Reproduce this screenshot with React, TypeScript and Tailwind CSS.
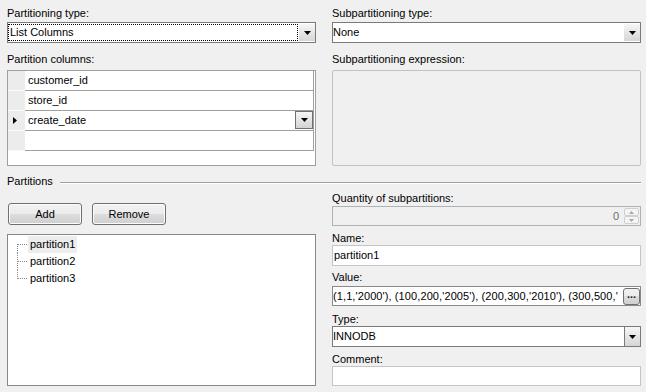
import React from "react";

function Label({ children, className = "" }: { children: React.ReactNode; className?: string }) {
  return <div className={`h-[13px] leading-[13px] whitespace-nowrap ${className}`}>{children}</div>;
}

function Arrow() {
  return (
    <svg width="7" height="4" viewBox="0 0 7 4" className="block">
      <path d="M0 0H7L3.5 4Z" fill="#000" />
    </svg>
  );
}

function DropBtn({ className = "" }: { className?: string }) {
  return (
    <div className={`w-[16px] flex items-center justify-center bg-linear-to-b from-[#f6f6f6] to-[#d6d6d6] ${className}`}>
      <Arrow />
    </div>
  );
}

function Btn({ children }: { children: React.ReactNode }) {
  return (
    <div className="w-[74px] h-[22px] rounded-[3px] border border-[#707070] bg-[linear-gradient(to_bottom,#f2f2f2_0%,#ebebeb_50%,#dddddd_50%,#cfcfcf_100%)] shadow-[inset_0_0_0_1px_#fbfbfb] flex items-center justify-center leading-none">
      {children}
    </div>
  );
}

function Grid() {
  const rows = ["customer_id", "store_id", "create_date", ""];
  return (
    <div className="mt-[4px] h-[96px] border border-[#a0a0a0] bg-white flex flex-col">
      {rows.map((r, i) => (
        <div key={i} className="flex h-[20px] mr-px">
          <div className="w-[17px] bg-[#ececec] border-b border-[#fafafa] flex items-center pl-[5px]">
            {i === 2 && (
              <svg width="4" height="7" viewBox="0 0 4 7" className="block">
                <path d="M0 0L4 3.5L0 7Z" fill="#000" />
              </svg>
            )}
          </div>
          <div className="flex-1 border-b border-r border-[#a0a0a0] flex items-center pl-[3px]">
            <span className="flex-1">{r}</span>
            {i === 2 && (
              <div className="self-start w-[18px] h-[18px] border border-[#707070] bg-linear-to-b from-[#f6f6f6] to-[#d4d4d4] flex items-center justify-center">
                <Arrow />
              </div>
            )}
          </div>
        </div>
      ))}
    </div>
  );
}

function Tree() {
  const items = ["partition1", "partition2", "partition3"];
  return (
    <div className="mt-[9px] h-[152px] border border-[#828790] bg-white pt-px">
      {items.map((t, i) => (
        <div key={t} className="flex h-[17px]">
          <svg width="20" height="17" viewBox="0 0 20 17" className="block shrink-0" shapeRendering="crispEdges">
            <line
              x1="9.5"
              x2="9.5"
              y1={i === 0 ? 8 : 0}
              y2={i === 2 ? 9 : 17}
              stroke="#8a8a8a"
              strokeDasharray="1 1"
            />
            <line x1="10" x2="20" y1="8.5" y2="8.5" stroke="#8a8a8a" strokeDasharray="1 1" />
          </svg>
          <div className={`px-[2px] leading-[17px] ${i === 0 ? "bg-[#ededed]" : ""}`}>{t}</div>
        </div>
      ))}
    </div>
  );
}

export default function App() {
  return (
    <div className="w-[646px] h-[392px] bg-[#f0f0f0] overflow-hidden text-[11px] text-black [font-family:'Liberation_Sans',Arial,sans-serif] pl-[7px] pr-[5px] pt-[7px]">
      <div className="flex gap-[16px]">
        <div className="w-[309px] flex flex-col">
          <Label>Partitioning type:</Label>
          <div className="mt-[2px] h-[21px] border border-[#7a7a7a] bg-white flex py-px">
            <div className="flex-1 mr-px border border-dotted border-black flex items-center pl-px">List Columns</div>
            <DropBtn />
          </div>
          <Label className="mt-[10px]">Partition columns:</Label>
          <Grid />
        </div>
        <div className="w-[309px] flex flex-col">
          <Label>Subpartitioning type:</Label>
          <div className="mt-[2px] h-[21px] border border-[#7a7a7a] bg-white flex py-px">
            <div className="flex-1 flex items-center">None</div>
            <DropBtn />
          </div>
          <Label className="mt-[10px]">Subpartitioning expression:</Label>
          <div className="mt-[4px] h-[96px] border border-[#c2c2c2] rounded-[2px] bg-[#f0f0f0]" />
        </div>
      </div>

      <div className="mt-[9px] flex">
        <Label>Partitions</Label>
        <div className="flex-1 ml-[7px] mt-[7px] h-[2px] border-t border-[#a0a0a0] border-b border-b-white" />
      </div>

      <div className="flex gap-[16px]">
        <div className="w-[309px] flex flex-col">
          <div className="mt-[15px] flex gap-[10px] pl-px">
            <Btn>Add</Btn>
            <Btn>Remove</Btn>
          </div>
          <Tree />
        </div>
        <div className="w-[309px] flex flex-col">
          <Label className="mt-[4px]">Quantity of subpartitions:</Label>
          <div className="mt-[1px] h-[20px] border border-[#adb2b5] bg-[#f0f0f0] flex py-px pr-px">
            <div className="flex-1 flex items-center justify-end pr-[5px] text-[#6d6d6d]">0</div>
            <div className="w-[15px] flex flex-col">
              <div className="flex-1 border border-[#cfcfcf] rounded-[2px] bg-[#f4f4f4] flex items-center justify-center">
                <svg width="5" height="3" viewBox="0 0 5 3" className="block">
                  <path d="M0 3L2.5 0L5 3Z" fill="#a8a8a8" />
                </svg>
              </div>
              <div className="flex-1 border border-[#cfcfcf] rounded-[2px] bg-[#f4f4f4] flex items-center justify-center">
                <svg width="5" height="3" viewBox="0 0 5 3" className="block">
                  <path d="M0 0L5 0L2.5 3Z" fill="#a8a8a8" />
                </svg>
              </div>
            </div>
          </div>
          <Label className="mt-[6px]">Name:</Label>
          <div className="h-[21px] border border-[#c5c5c5] bg-white flex items-center pl-px">partition1</div>
          <Label className="mt-[5px]">Value:</Label>
          <div className="mt-[2px] h-[20px] border border-[#8a8a8a] bg-white flex items-center">
            <div className="flex-1 min-w-0 whitespace-nowrap tracking-[0.1px]">
              (1,1,'2000'), (100,200,'2005'), (200,300,'2010'), (300,500,'
            </div>
            <div className="shrink-0 w-[17px] h-[17px] rounded-[3px] border border-[#707070] bg-[linear-gradient(to_bottom,#f2f2f2_0%,#ebebeb_50%,#dddddd_50%,#cfcfcf_100%)] flex items-center justify-center font-bold leading-none pb-[4px] text-[#222]">
              ...
            </div>
          </div>
          <Label className="mt-[7px]">Type:</Label>
          <div className="h-[21px] border border-[#7a7a7a] bg-white flex">
            <div className="flex-1 flex items-center">INNODB</div>
            <DropBtn className="border-l border-[#7a7a7a]" />
          </div>
          <Label className="mt-[6px]">Comment:</Label>
          <div className="h-[20px] border border-[#c5c5c5] bg-white" />
        </div>
      </div>
    </div>
  );
}
